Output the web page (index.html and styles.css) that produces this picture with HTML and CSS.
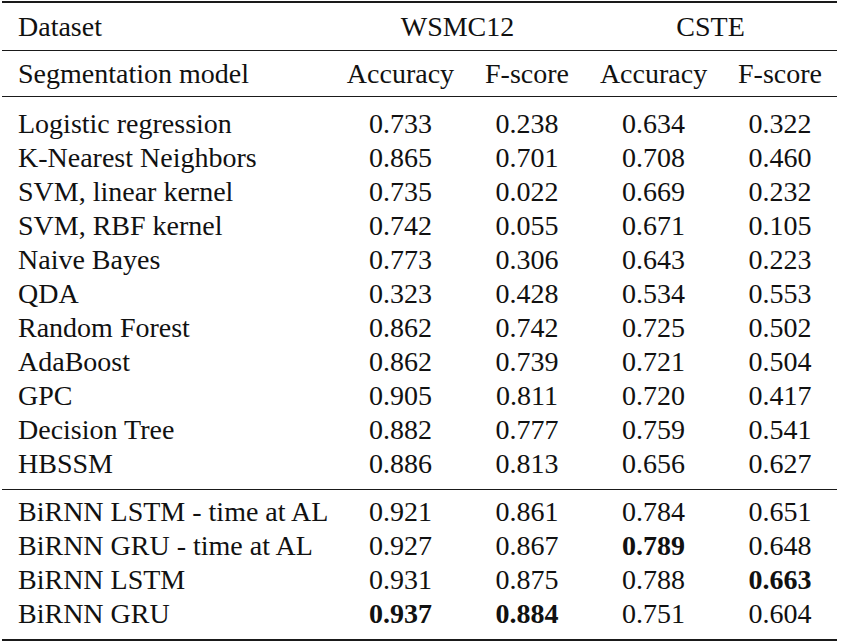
FILE: index.html
```html
<!DOCTYPE html>
<html lang="en">
<head>
<meta charset="utf-8">
<title>Segmentation results</title>
<link rel="stylesheet" href="styles.css">
</head>
<body>
<table class="results">
  <colgroup>
    <col class="c-model">
    <col class="c-acc">
    <col class="c-f">
    <col class="c-acc">
    <col class="c-f">
  </colgroup>
  <thead>
    <tr class="row-dataset">
      <th class="name">Dataset</th>
      <th colspan="2">WSMC12</th>
      <th colspan="2">CSTE</th>
    </tr>
    <tr class="row-metrics">
      <th class="name">Segmentation model</th>
      <th>Accuracy</th>
      <th>F-score</th>
      <th>Accuracy</th>
      <th>F-score</th>
    </tr>
  </thead>
  <tbody class="group group-classic">
    <tr><td class="name">Logistic regression</td><td>0.733</td><td>0.238</td><td>0.634</td><td>0.322</td></tr>
    <tr><td class="name">K-Nearest Neighbors</td><td>0.865</td><td>0.701</td><td>0.708</td><td>0.460</td></tr>
    <tr><td class="name">SVM, linear kernel</td><td>0.735</td><td>0.022</td><td>0.669</td><td>0.232</td></tr>
    <tr><td class="name">SVM, RBF kernel</td><td>0.742</td><td>0.055</td><td>0.671</td><td>0.105</td></tr>
    <tr><td class="name">Naive Bayes</td><td>0.773</td><td>0.306</td><td>0.643</td><td>0.223</td></tr>
    <tr><td class="name">QDA</td><td>0.323</td><td>0.428</td><td>0.534</td><td>0.553</td></tr>
    <tr><td class="name">Random Forest</td><td>0.862</td><td>0.742</td><td>0.725</td><td>0.502</td></tr>
    <tr><td class="name">AdaBoost</td><td>0.862</td><td>0.739</td><td>0.721</td><td>0.504</td></tr>
    <tr><td class="name">GPC</td><td>0.905</td><td>0.811</td><td>0.720</td><td>0.417</td></tr>
    <tr><td class="name">Decision Tree</td><td>0.882</td><td>0.777</td><td>0.759</td><td>0.541</td></tr>
    <tr><td class="name">HBSSM</td><td>0.886</td><td>0.813</td><td>0.656</td><td>0.627</td></tr>
  </tbody>
  <tbody class="group group-rnn">
    <tr><td class="name">BiRNN LSTM - time at AL</td><td>0.921</td><td>0.861</td><td>0.784</td><td>0.651</td></tr>
    <tr><td class="name">BiRNN GRU - time at AL</td><td>0.927</td><td>0.867</td><td class="best">0.789</td><td>0.648</td></tr>
    <tr><td class="name">BiRNN LSTM</td><td>0.931</td><td>0.875</td><td>0.788</td><td class="best">0.663</td></tr>
    <tr><td class="name">BiRNN GRU</td><td class="best">0.937</td><td class="best">0.884</td><td>0.751</td><td>0.604</td></tr>
  </tbody>
</table>
</body>
</html>
```

FILE: styles.css
```css
html, body {
  margin: 0;
  padding: 0;
  background: #ffffff;
}

body {
  padding: 1px 0 0 2px;
}

.results {
  border-collapse: collapse;
  table-layout: fixed;
  width: 835px;
  font-family: "Liberation Serif", "Times New Roman", serif;
  font-size: 28px;
  line-height: 34px;
  color: #111111;
  border-top: 2px solid #1a1a1a;
  border-bottom: 2px solid #1a1a1a;
}

.c-model { width: 329px; }
.c-acc { width: 139px; }
.c-f { width: 114px; }

.results th,
.results td {
  padding: 0;
  text-align: center;
  font-weight: normal;
  white-space: nowrap;
}

.results .name {
  text-align: left;
  padding-left: 16px;
}

.row-dataset th {
  padding-top: 7px;
  padding-bottom: 6px;
  border-bottom: 1px solid #1a1a1a;
}

.row-metrics th {
  padding-top: 6px;
  padding-bottom: 5px;
  border-bottom: 1px solid #1a1a1a;
}

.group-classic tr:first-child td {
  padding-top: 10px;
}

.group-classic tr:last-child td {
  padding-bottom: 8px;
  border-bottom: 1px solid #1a1a1a;
}

.group-rnn tr:first-child td {
  padding-top: 5px;
}

.group-rnn tr:last-child td {
  padding-bottom: 8px;
}

.results .best {
  font-weight: bold;
}
```
